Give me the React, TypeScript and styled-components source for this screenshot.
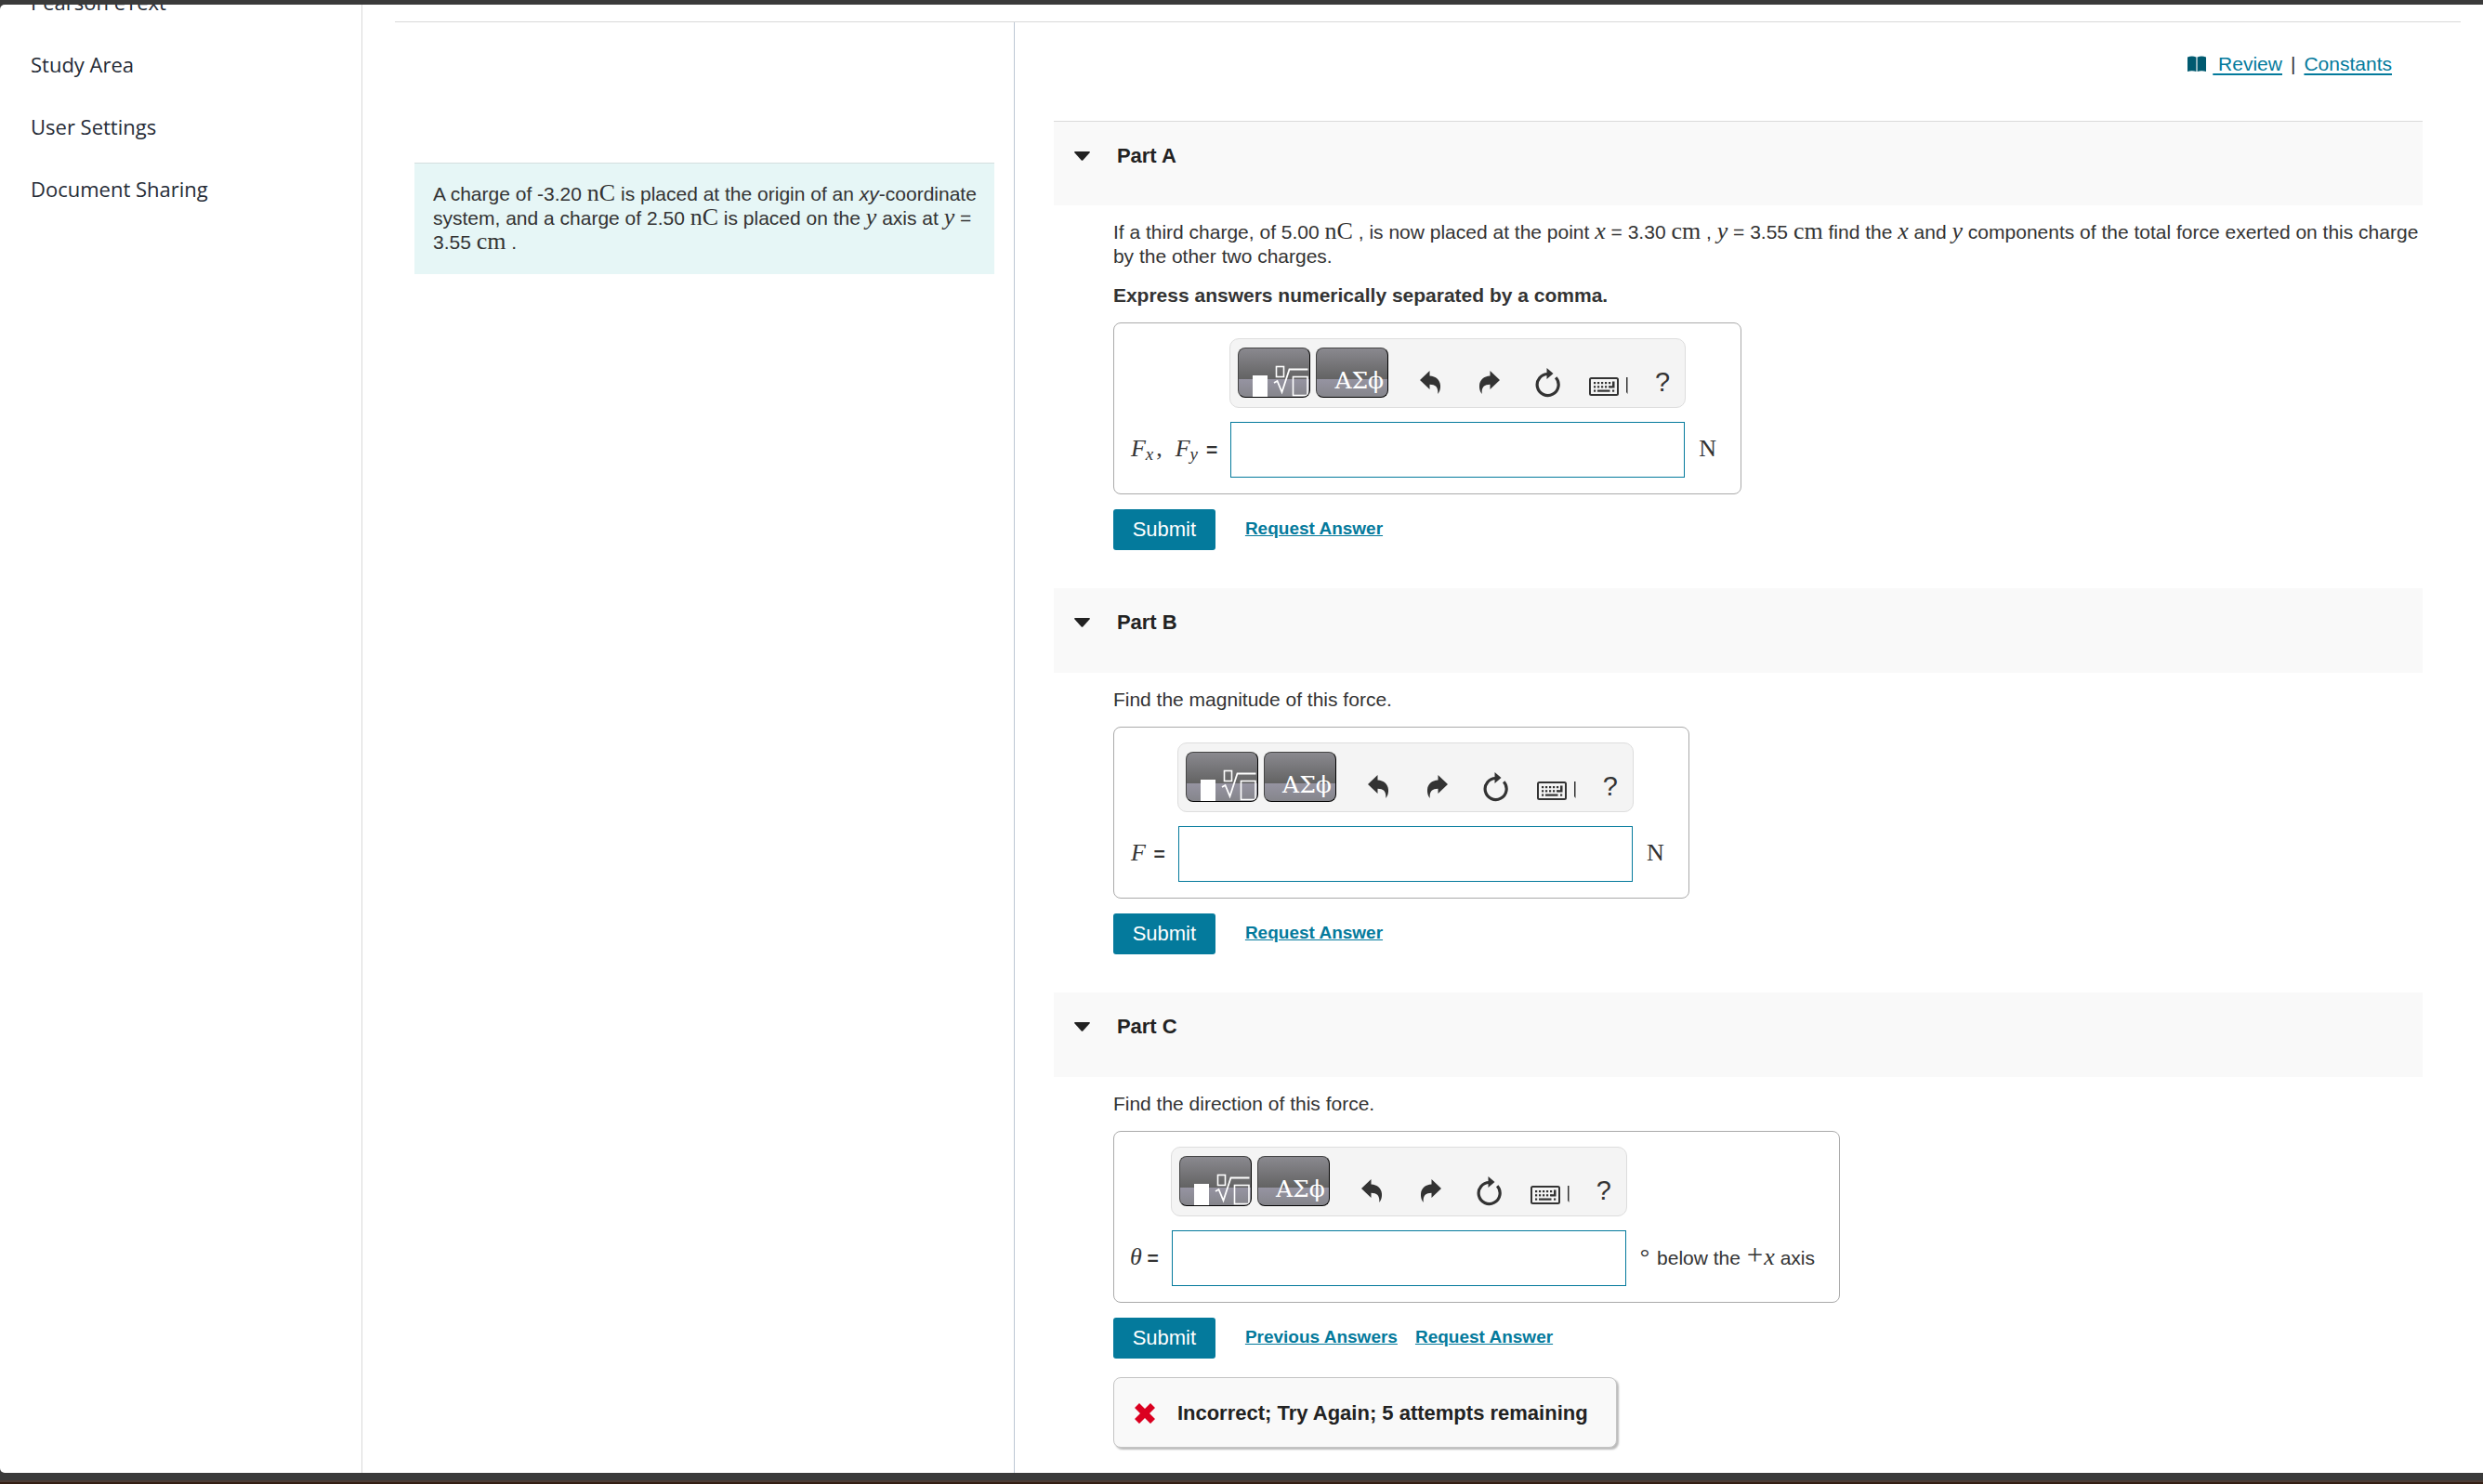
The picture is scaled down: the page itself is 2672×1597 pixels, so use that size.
import React from 'react';
import styled, { createGlobalStyle } from 'styled-components';

const SANS = '"Liberation Sans", Arial, Helvetica, sans-serif';
const SERIF = '"Liberation Serif", "Times New Roman", serif';
const TEAL = '#047a9c';

const GlobalStyle = createGlobalStyle`
  *, *::before, *::after { box-sizing: border-box; }
  body {
    margin: 0;
    background: #3a3a3a;
    color: #333;
    font: 21px/26px ${SANS};
  }
  button { font: inherit; cursor: pointer; }
  p, h2 { margin: 0; }
`;

const Frame = styled.div`
  display: flex;
  flex-direction: column;
  height: 100vh;
`;

const TopEdge = styled.div`
  flex: none;
  height: 5px;
  background: #3a3a3a;
`;

const BottomEdge = styled.div`
  flex: none;
  height: 12px;
  background: linear-gradient(#3a3a3a 8px, #4c3c35 8px, #4c3c35 10px, #331f14 10px);
`;

const Page = styled.div`
  flex: 1;
  min-height: 0;
  display: flex;
  overflow: hidden;
  background: #fff;
  border-radius: 5px 0 0 5px;
`;

const Sidebar = styled.nav`
  flex: 0 0 390px;
  display: flex;
  flex-direction: column;
  justify-content: flex-start;
  border-right: 1px solid #d9d9d9;
  overflow: hidden;
`;

const SideList = styled.ul`
  list-style: none;
  margin: -36px 0 0;
  padding: 0 33px;
`;

const SideLink = styled.a`
  display: block;
  font: 22px/67px "Open Sans", "Noto Sans", sans-serif;
  color: #252b36;
  text-decoration: none;
`;

const Main = styled.main`
  flex: 1;
  min-width: 0;
  display: flex;
  margin: 18px 24px 0 35px;
  border-top: 1px solid #dadada;
`;

const ProblemColumn = styled.section`
  flex: 0 0 30%;
  padding: 151px 21px 0;
  border-right: 1px solid #bcc6d3;
`;

const ProblemText = styled.div`
  padding: 20px 8px 21px 20px;
  background: #e6f6f6;
  border-top: 1px solid #d4dfdf;
`;

const PartsColumn = styled.section`
  flex: 1;
  min-width: 0;
  padding: 0 41px 0 42px;
`;

const Resources = styled.div`
  display: flex;
  justify-content: flex-end;
  align-items: center;
  padding: 32px 33px 48px 0;
  white-space: pre;
`;

const ResourceLink = styled.a`
  color: ${TEAL};
  text-decoration: underline;
  text-decoration-thickness: 2px;
  text-underline-offset: 3px;
`;

const Separator = styled.span`
  margin: 0 9px;
`;

const BookIcon = styled.svg`
  width: 20px;
  height: 18px;
  margin-right: 7px;
`;

const PartHeader = styled.header<{ $ruled?: boolean }>`
  display: flex;
  align-items: center;
  gap: 29px;
  height: 91px;
  padding: 0 22px 17px;
  background: #f9f9f9;
  border-top: ${(p) => (p.$ruled ? '1px solid #dadada' : 'none')};
`;

const Collapse = styled.button`
  display: flex;
  padding: 0;
  border: 0;
  background: none;
  color: #222;
`;

const PartTitle = styled.h2`
  font-size: 22px;
  line-height: 26px;
  color: #222;
`;

const PartBody = styled.div`
  display: flex;
  flex-direction: column;
  align-items: flex-start;
  gap: 16px;
  padding: 16px 0 41px 64px;
`;

const Question = styled.p`
  margin-right: -12px;
`;

const Instruction = styled.p`
  font-weight: bold;
`;

const Roman = styled.span`
  font-family: ${SERIF};
  font-size: 26px;
  line-height: 0;
`;

const Operator = styled(Roman)`
  padding: 0 1px;
  font-size: 31px;
`;

const Degree = styled(Roman)`
  padding-right: 2px;
`;

const Variable = styled(Roman)`
  font-style: italic;

  sub {
    font-size: 19px;
    line-height: 0;
    vertical-align: -4px;
  }
`;

const FieldSymbol = styled(Variable)`
  padding: 0 3px 0 1px;
`;

const AnswerBox = styled.div`
  display: grid;
  grid-template-columns: repeat(3, auto);
  align-items: center;
  row-gap: 15px;
  padding: 16px 26px 17px 17px;
  border: 1px solid #aaa;
  border-radius: 8px;
`;

const Toolbar = styled.div`
  grid-column: 2;
  display: flex;
  width: 491px;
  height: 75px;
  padding: 9px 2px 10px 8px;
  background: #f4f4f4;
  border: 1px solid #ddd;
  border-radius: 10px;
`;

const PaletteButton = styled.button`
  display: flex;
  justify-content: flex-end;
  align-items: flex-end;
  width: 78px;
  height: 54px;
  margin-right: 6px;
  padding: 0;
  overflow: hidden;
  color: #fff;
  background: linear-gradient(#8a898f, #636363 63%, #9694a2 63%, #85858b);
  border: 1px solid #444;
  border-right-color: #000;
  border-bottom-color: #000;
  border-radius: 8px;
`;

const Greek = styled.span`
  padding-right: 4px;
  font: 25px/34px "DejaVu Serif", ${SERIF};
`;

const ToolIcons = styled.div`
  display: grid;
  grid-template-columns: 64px 64px 60px 72px 44px;
  flex: 1;
  margin-left: 7px;
`;

const ToolButton = styled.button`
  display: flex;
  justify-content: center;
  align-items: flex-end;
  padding: 0;
  border: 0;
  background: none;
  color: #333;
  font-size: 29px;
  line-height: 34px;
`;

const AnswerLabel = styled.label`
  grid-column: 1;
  padding-right: 13px;
  font-weight: bold;
  white-space: nowrap;

  span { font-weight: normal; }
`;

const AnswerInput = styled.input`
  height: 60px;
  margin: 0 1px;
  padding: 0 12px;
  font: 24px ${SERIF};
  color: #333;
  border: 1px solid ${TEAL};
  border-radius: 0;
  outline: none;
`;

const Units = styled.div`
  padding-left: 14px;
`;

const Actions = styled.div`
  display: flex;
  align-items: center;
  gap: 19px;
`;

const Submit = styled.button`
  width: 110px;
  height: 44px;
  margin-right: 13px;
  padding: 0;
  font-size: 22px;
  color: #fff;
  background: ${TEAL};
  border: 0;
  border-radius: 3px;
`;

const ActionLink = styled.a`
  padding-bottom: 2px;
  font-size: 19px;
  font-weight: bold;
  color: ${TEAL};
  text-decoration: underline;
`;

const Feedback = styled.div`
  display: flex;
  align-items: center;
  gap: 24px;
  height: 76px;
  margin-top: 4px;
  padding: 2px 30px 0 22px;
  font-size: 22px;
  font-weight: bold;
  color: #222;
  background: #f9f9f9;
  border: 1px solid #c4c4c4;
  border-radius: 8px;
  box-shadow: 2px 2px 2px #bbb;
`;

const TemplateIcon = () => (
  <svg width="76" height="52" viewBox="1 1 76 52" fill="none" stroke="#fff" strokeWidth="1.6" aria-hidden="true">
    <rect x="16" y="30" width="16" height="23" fill="#fff" stroke="none" />
    <rect x="41.5" y="20.5" width="8" height="11" />
    <path d="M39 38l3.5-2 5 12L55.500 23.500H75.500" strokeWidth="1.8" />
    <rect x="59.500" y="31.500" width="15.500" height="20" />
  </svg>
);

const UndoShape = () => (
  <path d="M0 10L10.500 0v5.500C18 6 22.500 10.500 22 18c-.2 3-1.600 5.800-2.800 7 .8-6.500-1.700-10.300-8.700-10.300V20z" fill="#333" />
);

const UndoIcon = () => (
  <svg width="22" height="29" viewBox="0 0 22 29" aria-hidden="true"><UndoShape /></svg>
);

const RedoIcon = () => (
  <svg width="22" height="29" viewBox="0 0 22 29" aria-hidden="true"><g transform="matrix(-1 0 0 1 22 0)"><UndoShape /></g></svg>
);

const ResetIcon = () => (
  <svg width="28" height="32" viewBox="0 0 28 32" aria-hidden="true">
    <path d="M15 6.500A11.500 11.500 0 1 0 23.200 10.300" fill="none" stroke="#333" strokeWidth="3.200" />
    <path d="M13.500 0l7 6-7 6z" fill="#333" />
  </svg>
);

const KeyboardIcon = () => (
  <svg width="42" height="23" viewBox="0 0 42 23" fill="#333" aria-hidden="true">
    <rect x="1" y="2" width="30" height="18" rx="1.500" fill="none" stroke="#333" strokeWidth="2" />
    {[5, 9, 13, 17, 21].map((x) => <rect key={x} x={x} y="6" width="2.200" height="2.200" />)}
    {[5, 9, 13, 17, 21].map((x) => <rect key={x} x={x} y="10.200" width="2.200" height="2.200" />)}
    <path d="M25 5.500h2.500v6.900H22.500v-2.200H25z" />
    <rect x="5" y="14.500" width="2.200" height="2.200" />
    <rect x="9" y="14.500" width="13.500" height="2.200" />
    <rect x="25" y="14.500" width="2.200" height="2.200" />
    <path d="M40 1h1.500v18l-1.500-2z" />
  </svg>
);

interface EditorProps {
  id: string;
  label: React.ReactNode;
  units: React.ReactNode;
}

const AnswerEditor = ({ id, label, units }: EditorProps) => (
  <AnswerBox>
    <Toolbar role="toolbar" aria-label="Equation editor">
      <PaletteButton type="button" aria-label="Templates"><TemplateIcon /></PaletteButton>
      <PaletteButton type="button" aria-label="Symbols"><Greek>ΑΣϕ</Greek></PaletteButton>
      <ToolIcons>
        <ToolButton type="button" aria-label="Undo"><UndoIcon /></ToolButton>
        <ToolButton type="button" aria-label="Redo"><RedoIcon /></ToolButton>
        <ToolButton type="button" aria-label="Reset"><ResetIcon /></ToolButton>
        <ToolButton type="button" aria-label="Keyboard shortcuts"><KeyboardIcon /></ToolButton>
        <ToolButton type="button">?</ToolButton>
      </ToolIcons>
    </Toolbar>
    <AnswerLabel htmlFor={id}>{label} =</AnswerLabel>
    <AnswerInput id={id} type="text" />
    <Units>{units}</Units>
  </AnswerBox>
);

interface PartProps {
  title: string;
  ruled?: boolean;
  children: React.ReactNode;
}

const Part = ({ title, ruled, children }: PartProps) => (
  <article>
    <PartHeader $ruled={ruled}>
      <Collapse type="button" aria-label={`Collapse ${title}`}>
        <svg width="17" height="10" viewBox="0 0 17 10" aria-hidden="true">
          <path d="M1 0h15q1.500 0 .5 1.500L9.500 9.300q-1 1-2 0L.5 1.500Q-.5 0 1 0z" fill="#222" />
        </svg>
      </Collapse>
      <PartTitle>{title}</PartTitle>
    </PartHeader>
    <PartBody>{children}</PartBody>
  </article>
);

const X = () => <Variable>x</Variable>;
const Y = () => <Variable>y</Variable>;

const MENU = ['Pearson eText', 'Study Area', 'User Settings', 'Document Sharing'];

export default function App() {
  return (
    <Frame>
      <GlobalStyle />
      <TopEdge />
      <Page>
        <Sidebar>
          <SideList>
            {MENU.map((item) => (
              <li key={item}><SideLink href="#">{item}</SideLink></li>
            ))}
          </SideList>
        </Sidebar>
        <Main>
          <ProblemColumn>
            <ProblemText>
              A charge of -3.20 <Roman>nC</Roman> is placed at the origin of an <em>xy</em>-coordinate system, and a
              charge of 2.50 <Roman>nC</Roman> is placed on the <Y /> axis at <Y /> = 3.55 <Roman>cm</Roman> .
            </ProblemText>
          </ProblemColumn>
          <PartsColumn>
            <Resources>
              <BookIcon viewBox="0 0 20 18" aria-hidden="true">
                <path d="M0 1.500Q5-.5 9.300 1.500V17Q5 15.500 0 17zM20 1.500Q15-.5 10.700 1.500V17Q15 15.500 20 17z" fill="#005a70" />
                <path d="M9.300 1.500h1.400V17H9.300z" fill="#7fa9b4" />
              </BookIcon>
              <ResourceLink href="#"> Review</ResourceLink>
              <Separator>|</Separator>
              <ResourceLink href="#">Constants</ResourceLink>
            </Resources>

            <Part title="Part A" ruled>
              <Question>
                If a third charge, of 5.00 <Roman>nC</Roman> , is now placed at the point <X /> = 3.30{' '}
                <Roman>cm</Roman> , <Y /> = 3.55 <Roman>cm</Roman> find the <X /> and <Y /> components of the total
                force exerted on this charge by the other two charges.
              </Question>
              <Instruction>Express answers numerically separated by a comma.</Instruction>
              <AnswerEditor
                id="force-components"
                label={
                  <>
                    <FieldSymbol>F<sub>x</sub></FieldSymbol>
                    <Roman>, &nbsp;</Roman>
                    <FieldSymbol>F<sub>y</sub></FieldSymbol>
                  </>
                }
                units={<Roman>N</Roman>}
              />
              <Actions>
                <Submit type="button">Submit</Submit>
                <ActionLink href="#">Request Answer</ActionLink>
              </Actions>
            </Part>

            <Part title="Part B">
              <Question>Find the magnitude of this force.</Question>
              <AnswerEditor id="magnitude" label={<FieldSymbol>F</FieldSymbol>} units={<Roman>N</Roman>} />
              <Actions>
                <Submit type="button">Submit</Submit>
                <ActionLink href="#">Request Answer</ActionLink>
              </Actions>
            </Part>

            <Part title="Part C">
              <Question>Find the direction of this force.</Question>
              <AnswerEditor
                id="direction"
                label={<Variable>θ</Variable>}
                units={<><Degree>°</Degree> below the <Operator>+</Operator><X /> axis</>}
              />
              <Actions>
                <Submit type="button">Submit</Submit>
                <ActionLink href="#">Previous Answers</ActionLink>
                <ActionLink href="#">Request Answer</ActionLink>
              </Actions>
              <Feedback role="status">
                <svg width="22" height="22" viewBox="0 0 22 22" aria-hidden="true">
                  <path d="M5 0l6 6 6-6 5 5-6 6 6 6-5 5-6-6-6 6-5-5 6-6-6-6z" fill="#db0020" />
                </svg>
                Incorrect; Try Again; 5 attempts remaining
              </Feedback>
            </Part>
          </PartsColumn>
        </Main>
      </Page>
      <BottomEdge />
    </Frame>
  );
}
